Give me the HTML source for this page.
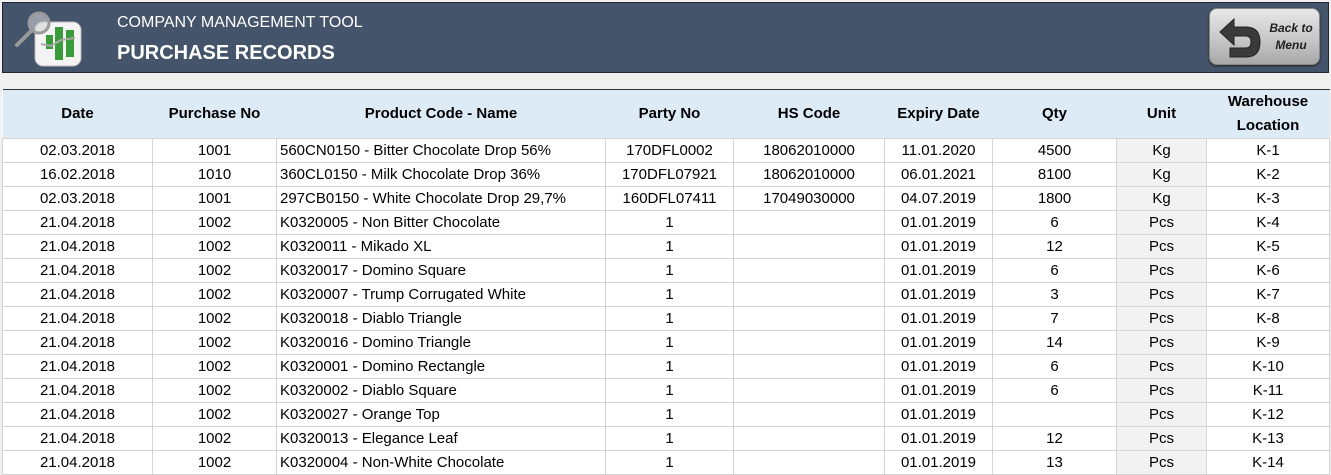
<!DOCTYPE html>
<html><head><meta charset="utf-8"><style>
*{margin:0;padding:0;box-sizing:border-box}
body{width:1331px;height:474px;background:#f0f0f0;position:relative;overflow:hidden;font-family:"Liberation Sans",sans-serif}
#hdr{position:absolute;left:2px;top:2px;width:1327px;height:71px;background:#44546a;border:1px solid #1e2633}
#t1{position:absolute;left:114px;top:11px;color:#fff;font-size:16px}
#t2{position:absolute;left:114px;top:39px;color:#fff;font-size:20px;font-weight:bold}
#btn{position:absolute;left:1209px;top:8px;width:111px;height:57px;border-radius:8px;background:linear-gradient(#e8e8e8,#c4c4c4 60%,#a8a8a8);border:1px solid #888;box-shadow:0 1px 2px #222}
#btn span{position:absolute;left:56px;top:11px;font-size:12px;font-style:italic;font-weight:bold;color:#222;text-align:center;line-height:17px;width:50px}
table{position:absolute;left:2px;top:89px;border-collapse:collapse;table-layout:fixed;width:1327px;font-size:15px;background:#fff}
td,th{border:1px solid #d4d4d4;height:24px;text-align:center;white-space:nowrap;overflow:hidden;padding:0}
th{height:49px;background:#ddebf7;font-weight:bold;font-size:15px;border:none;border-top:1px solid #333;line-height:24px}
td.l{text-align:left;padding-left:3px}
td.u{background:#f2f2f2}
</style></head><body>
<div id="hdr">
<svg style="position:absolute;left:8px;top:5px" width="78" height="60" viewBox="0 0 78 60">
<rect x="24" y="14" width="46" height="44" rx="8" fill="#f4f4f4" stroke="#bbb"/>
<rect x="35" y="27" width="7" height="14" fill="#3a9b3a"/>
<rect x="44" y="19" width="8" height="33" fill="#3a9b3a"/>
<rect x="55" y="22" width="8" height="27" fill="#3a9b3a"/>
<polyline points="30,36 40,38 50,32 64,30" fill="none" stroke="#aaa" stroke-width="2"/>
<circle cx="28" cy="15" r="10" fill="rgba(210,210,210,0.6)" stroke="#9a9a9a" stroke-width="3"/>
<line x1="21" y1="22" x2="6" y2="37" stroke="#999" stroke-width="4" stroke-linecap="round"/>
</svg>
<div id="t1">COMPANY MANAGEMENT TOOL</div>
<div id="t2">PURCHASE RECORDS</div>
</div>
<div id="btn">
<svg style="position:absolute;left:6px;top:7px" width="48" height="44" viewBox="0 0 48 44">
<path d="M4 16 L18 3 L18 11 L30 11 Q44 11 44 26 Q44 41 30 41 L14 41 L14 32 L30 32 Q35 32 35 26 Q35 20 30 20 L18 20 L18 29 Z" fill="#3a3a3a" stroke="#222"/>
</svg>
<span>Back to<br>Menu</span></div>
<table>
<colgroup><col style="width:150px"><col style="width:124px"><col style="width:329px"><col style="width:128px"><col style="width:151px"><col style="width:108px"><col style="width:124px"><col style="width:90px"><col style="width:123px"></colgroup>
<tr><th>Date</th><th>Purchase No</th><th>Product Code - Name</th><th>Party No</th><th>HS Code</th><th>Expiry Date</th><th>Qty</th><th>Unit</th><th>Warehouse<br>Location</th></tr>
<tr><td>02.03.2018</td><td>1001</td><td class="l">560CN0150 - Bitter Chocolate Drop 56%</td><td>170DFL0002</td><td>18062010000</td><td>11.01.2020</td><td>4500</td><td class="u">Kg</td><td>K-1</td></tr>
<tr><td>16.02.2018</td><td>1010</td><td class="l">360CL0150 - Milk Chocolate Drop 36%</td><td>170DFL07921</td><td>18062010000</td><td>06.01.2021</td><td>8100</td><td class="u">Kg</td><td>K-2</td></tr>
<tr><td>02.03.2018</td><td>1001</td><td class="l">297CB0150 - White Chocolate Drop 29,7%</td><td>160DFL07411</td><td>17049030000</td><td>04.07.2019</td><td>1800</td><td class="u">Kg</td><td>K-3</td></tr>
<tr><td>21.04.2018</td><td>1002</td><td class="l">K0320005 - Non Bitter Chocolate</td><td>1</td><td></td><td>01.01.2019</td><td>6</td><td class="u">Pcs</td><td>K-4</td></tr>
<tr><td>21.04.2018</td><td>1002</td><td class="l">K0320011 - Mikado XL</td><td>1</td><td></td><td>01.01.2019</td><td>12</td><td class="u">Pcs</td><td>K-5</td></tr>
<tr><td>21.04.2018</td><td>1002</td><td class="l">K0320017 - Domino Square</td><td>1</td><td></td><td>01.01.2019</td><td>6</td><td class="u">Pcs</td><td>K-6</td></tr>
<tr><td>21.04.2018</td><td>1002</td><td class="l">K0320007 - Trump Corrugated White</td><td>1</td><td></td><td>01.01.2019</td><td>3</td><td class="u">Pcs</td><td>K-7</td></tr>
<tr><td>21.04.2018</td><td>1002</td><td class="l">K0320018 - Diablo Triangle</td><td>1</td><td></td><td>01.01.2019</td><td>7</td><td class="u">Pcs</td><td>K-8</td></tr>
<tr><td>21.04.2018</td><td>1002</td><td class="l">K0320016 - Domino Triangle</td><td>1</td><td></td><td>01.01.2019</td><td>14</td><td class="u">Pcs</td><td>K-9</td></tr>
<tr><td>21.04.2018</td><td>1002</td><td class="l">K0320001 - Domino Rectangle</td><td>1</td><td></td><td>01.01.2019</td><td>6</td><td class="u">Pcs</td><td>K-10</td></tr>
<tr><td>21.04.2018</td><td>1002</td><td class="l">K0320002 - Diablo Square</td><td>1</td><td></td><td>01.01.2019</td><td>6</td><td class="u">Pcs</td><td>K-11</td></tr>
<tr><td>21.04.2018</td><td>1002</td><td class="l">K0320027 - Orange Top</td><td>1</td><td></td><td>01.01.2019</td><td></td><td class="u">Pcs</td><td>K-12</td></tr>
<tr><td>21.04.2018</td><td>1002</td><td class="l">K0320013 - Elegance Leaf</td><td>1</td><td></td><td>01.01.2019</td><td>12</td><td class="u">Pcs</td><td>K-13</td></tr>
<tr><td>21.04.2018</td><td>1002</td><td class="l">K0320004 - Non-White Chocolate</td><td>1</td><td></td><td>01.01.2019</td><td>13</td><td class="u">Pcs</td><td>K-14</td></tr>
</table>
</body></html>
